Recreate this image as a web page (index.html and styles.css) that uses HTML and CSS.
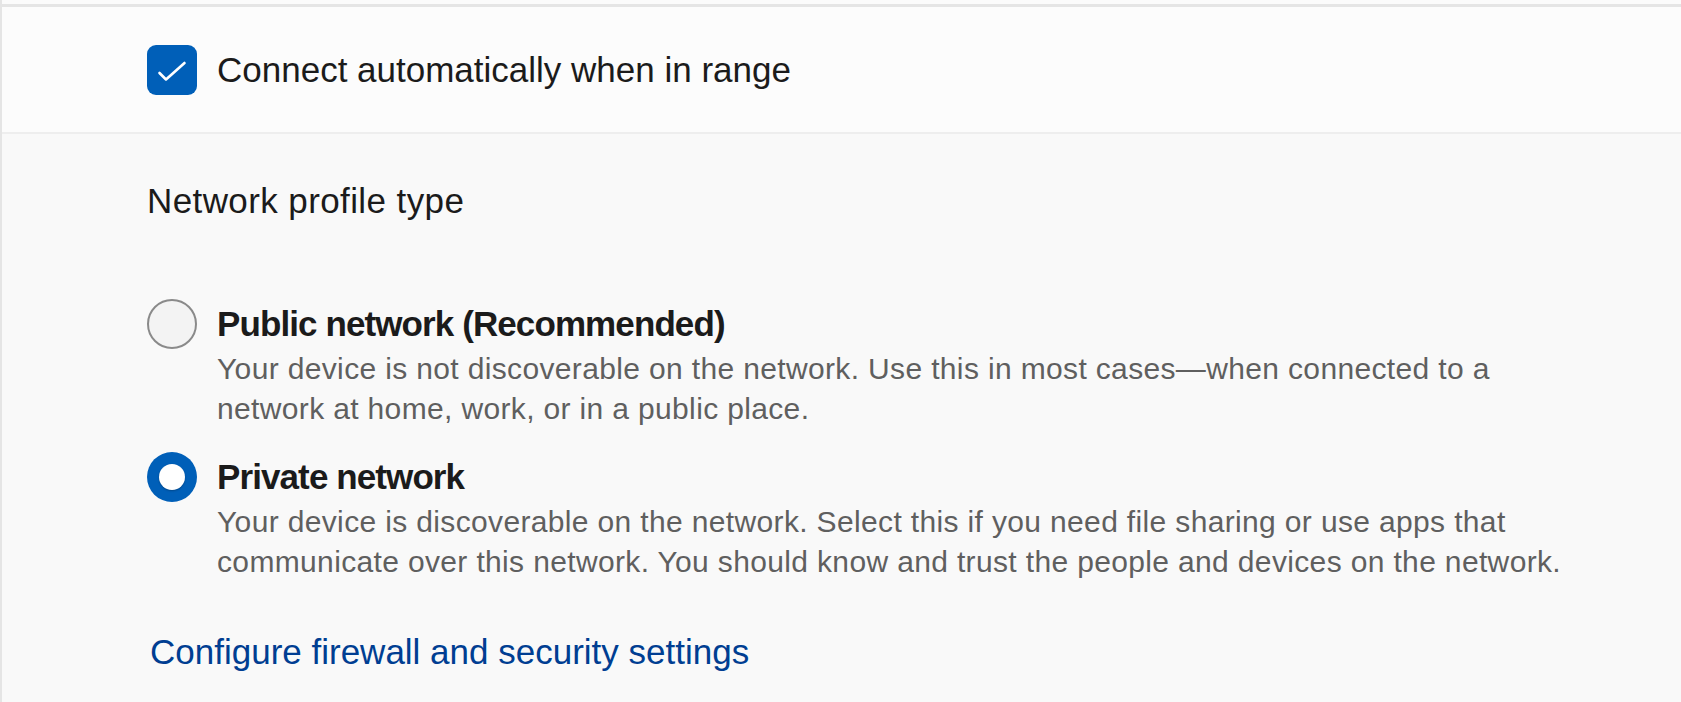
FILE: index.html
```html
<!DOCTYPE html>
<html lang="en">
<head>
<meta charset="utf-8">
<title>Network settings</title>
<link rel="stylesheet" href="styles.css">
</head>
<body>
<div class="page">
  <section class="header">
    <label class="check">
      <span class="box">
        <svg viewBox="0 0 50 50" width="50" height="50" aria-hidden="true">
          <path d="M12.5 28 L19 34.5 L37.5 18" fill="none" stroke="#ffffff" stroke-width="2.6" stroke-linecap="round" stroke-linejoin="round"/>
        </svg>
      </span>
      <span class="check-label">Connect automatically when in range</span>
    </label>
  </section>
  <section class="content">
    <div class="title">Network profile type</div>
    <div class="options">
      <div class="option">
        <span class="radio"></span>
        <div class="option-text">
          <div class="option-title">Public network (Recommended)</div>
          <div class="desc">Your device is not discoverable on the network. Use this in most cases—when connected to a<br>network at home, work, or in a public place.</div>
        </div>
      </div>
      <div class="option">
        <span class="radio checked"></span>
        <div class="option-text">
          <div class="option-title">Private network</div>
          <div class="desc">Your device is discoverable on the network. Select this if you need file sharing or use apps that<br>communicate over this network. You should know and trust the people and devices on the network.</div>
        </div>
      </div>
    </div>
    <a class="link" href="#">Configure firewall and security settings</a>
  </section>
</div>
</body>
</html>
```

FILE: styles.css
```css
html, body {
  margin: 0;
  padding: 0;
}

body {
  background: #fbfbfb;
  font-family: "Liberation Sans", Arial, sans-serif;
  color: #1b1b1b;
}

.page {
  height: 702px;
  box-sizing: border-box;
  padding-top: 4px;
  border-left: 2px solid #e5e5e5;
  display: flex;
  flex-direction: column;
  overflow: hidden;
}

.header {
  flex: none;
  height: 130px;
  box-sizing: border-box;
  border-top: 3px solid #e5e5e5;
  border-bottom: 2px solid #eeeeee;
  background: #fcfcfc;
  display: flex;
  align-items: center;
  padding-left: 145px;
}

.check {
  display: flex;
  align-items: center;
  gap: 20px;
}

.box {
  width: 50px;
  height: 50px;
  border-radius: 9px;
  background: #005fb8;
  display: block;
}

.box svg {
  display: block;
}

.check-label {
  font-size: 35px;
  line-height: 50px;
  color: #1b1b1b;
}

.content {
  flex: 1;
  background: #f9f9f9;
  padding: 42px 0 0 145px;
}

.title {
  font-size: 35px;
  line-height: 50px;
  letter-spacing: 0.4px;
  color: #1b1b1b;
}

.options {
  margin-top: 73px;
  display: flex;
  flex-direction: column;
  gap: 23px;
}

.option {
  display: flex;
  align-items: flex-start;
  gap: 20px;
}

.radio {
  flex: none;
  width: 50px;
  height: 50px;
  box-sizing: border-box;
  border-radius: 50%;
  border: 2.5px solid #8a8a8a;
  background: #f3f3f3;
  display: flex;
  align-items: center;
  justify-content: center;
}

.radio.checked {
  border: none;
  background: #005fb8;
}

.radio.checked::after {
  content: "";
  width: 26px;
  height: 26px;
  border-radius: 50%;
  background: #ffffff;
  box-shadow: 0 1px 2px rgba(0, 0, 0, 0.25);
}

.option-title {
  font-size: 35px;
  line-height: 50px;
  font-weight: 700;
  letter-spacing: -0.9px;
  color: #1b1b1b;
}

.desc {
  font-size: 30px;
  line-height: 40px;
  letter-spacing: 0.35px;
  color: #5f5f5f;
}

.link {
  display: block;
  margin-top: 45px;
  font-size: 35px;
  line-height: 50px;
  color: #003e92;
  text-decoration: none;
  padding-left: 3px;
}
```
